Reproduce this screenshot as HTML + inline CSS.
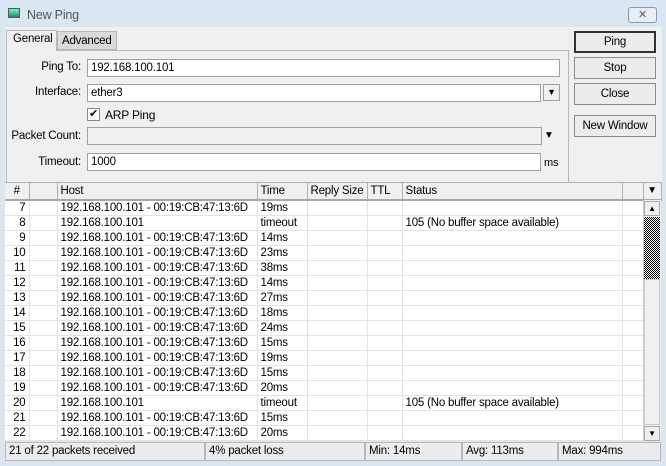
<!DOCTYPE html>
<html><head><style>
*{box-sizing:border-box;margin:0;padding:0}
body{width:666px;height:466px;background:#dbe6f3;font-family:"Liberation Sans",sans-serif;font-size:11.5px;color:#000;position:relative;overflow:hidden;letter-spacing:-0.2px}
.abs{position:absolute}
.panel{left:5px;top:27px;width:657px;height:435px;background:#f0f0f0}
.inp{position:absolute;background:#fff;border:1px solid #a0a0a0;height:18px;padding-left:3px;line-height:16px}
.lbl{position:absolute;text-align:right;width:80px}
.btn{position:absolute;left:574px;width:82px;height:22px;border:1px solid #8c8c8c;background:#ececec;text-align:center;line-height:20px}
table{border-collapse:collapse;position:absolute;left:5px;top:182px;table-layout:fixed}
td{height:15px;border-right:1px solid #e3e3e3;border-bottom:1px solid #e3e3e3;padding:0 3px;white-space:nowrap;overflow:hidden;line-height:14px;background:#fff}
th{height:17px;font-weight:normal;text-align:left;padding:0 3px;border-right:1px solid #b0b0b0;border-bottom:2px solid #a8a8a8;background:#f0f0f0;border-top:1px solid #b0b0b0}
td.n{text-align:right}
.sb{position:absolute;top:442px;height:19px;border:1px solid #b8b8b8;background:#ececec;padding-left:3px;line-height:17px}
</style></head><body>
<div class="abs" style="left:8px;top:8px;width:12px;height:10px;border:1px solid #555;background:linear-gradient(#6fa,#288)"></div>
<div class="abs" style="left:27px;top:8px;font-size:12.5px;color:#555">New Ping</div>
<div class="abs" style="left:628px;top:7px;width:29px;height:16px;border:1px solid #8a9ab0;border-radius:3px;background:#e8eef6;text-align:center;font-size:11px;line-height:14px;color:#556">✕</div>
<div class="abs panel"></div>
<div class="abs" style="left:6px;top:50px;width:563px;height:132px;border:1px solid #b8b8b8;border-bottom:none;background:#f0f0f0"></div>
<div class="abs" style="left:6px;top:30px;width:51px;height:21px;background:#f0f0f0;border:1px solid #b8b8b8;border-bottom:none;padding:2px 0 0 6px">General</div>
<div class="abs" style="left:57px;top:31px;width:60px;height:19px;background:#dadada;border:1px solid #b8b8b8;padding:3px 0 0 4px">Advanced</div>
<div class="lbl" style="left:1px;top:61px">Ping To:</div>
<div class="inp" style="left:87px;top:59px;width:473px">192.168.100.101</div>
<div class="lbl" style="left:1px;top:86px">Interface:</div>
<div class="inp" style="left:87px;top:84px;width:454px">ether3</div>
<div class="abs" style="left:543px;top:84px;width:17px;height:17px;border:1px solid #a0a0a0;background:#f0f0f0;text-align:center;font-size:9px;line-height:15px">▼</div>
<div class="abs" style="left:87px;top:108px;width:13px;height:13px;border:1px solid #888;background:#fff;font-size:11px;line-height:11px;text-align:center">✔</div>
<div class="abs" style="left:105px;top:108px;font-size:12px">ARP Ping</div>
<div class="lbl" style="left:1px;top:130px">Packet Count:</div>
<div class="inp" style="left:87px;top:127px;width:455px;background:#f0f0f0"></div>
<div class="abs" style="left:544px;top:130px;font-size:10px">▼</div>
<div class="lbl" style="left:1px;top:156px">Timeout:</div>
<div class="inp" style="left:87px;top:153px;width:454px">1000</div>
<div class="abs" style="left:544px;top:157px;font-size:11px">ms</div>
<div class="btn" style="top:31px;border:2px solid #333;line-height:19px">Ping</div>
<div class="btn" style="top:57px">Stop</div>
<div class="btn" style="top:83px">Close</div>
<div class="btn" style="top:115px">New Window</div>
<table>
<colgroup><col style="width:24px"><col style="width:28px"><col style="width:200px"><col style="width:50px"><col style="width:60px"><col style="width:35px"><col style="width:220px"><col style="width:21px"><col style="width:18px"></colgroup>
<tr><th style="text-align:center">#</th><th></th><th>Host</th><th>Time</th><th>Reply Size</th><th>TTL</th><th>Status</th><th></th><th style="text-align:center;font-size:10px">▼</th></tr>
<tr><td class="n">7</td><td></td><td>192.168.100.101 - 00:19:CB:47:13:6D</td><td>19ms</td><td></td><td></td><td></td><td></td><td></td></tr>
<tr><td class="n">8</td><td></td><td>192.168.100.101</td><td>timeout</td><td></td><td></td><td>105 (No buffer space available)</td><td></td><td></td></tr>
<tr><td class="n">9</td><td></td><td>192.168.100.101 - 00:19:CB:47:13:6D</td><td>14ms</td><td></td><td></td><td></td><td></td><td></td></tr>
<tr><td class="n">10</td><td></td><td>192.168.100.101 - 00:19:CB:47:13:6D</td><td>23ms</td><td></td><td></td><td></td><td></td><td></td></tr>
<tr><td class="n">11</td><td></td><td>192.168.100.101 - 00:19:CB:47:13:6D</td><td>38ms</td><td></td><td></td><td></td><td></td><td></td></tr>
<tr><td class="n">12</td><td></td><td>192.168.100.101 - 00:19:CB:47:13:6D</td><td>14ms</td><td></td><td></td><td></td><td></td><td></td></tr>
<tr><td class="n">13</td><td></td><td>192.168.100.101 - 00:19:CB:47:13:6D</td><td>27ms</td><td></td><td></td><td></td><td></td><td></td></tr>
<tr><td class="n">14</td><td></td><td>192.168.100.101 - 00:19:CB:47:13:6D</td><td>18ms</td><td></td><td></td><td></td><td></td><td></td></tr>
<tr><td class="n">15</td><td></td><td>192.168.100.101 - 00:19:CB:47:13:6D</td><td>24ms</td><td></td><td></td><td></td><td></td><td></td></tr>
<tr><td class="n">16</td><td></td><td>192.168.100.101 - 00:19:CB:47:13:6D</td><td>15ms</td><td></td><td></td><td></td><td></td><td></td></tr>
<tr><td class="n">17</td><td></td><td>192.168.100.101 - 00:19:CB:47:13:6D</td><td>19ms</td><td></td><td></td><td></td><td></td><td></td></tr>
<tr><td class="n">18</td><td></td><td>192.168.100.101 - 00:19:CB:47:13:6D</td><td>15ms</td><td></td><td></td><td></td><td></td><td></td></tr>
<tr><td class="n">19</td><td></td><td>192.168.100.101 - 00:19:CB:47:13:6D</td><td>20ms</td><td></td><td></td><td></td><td></td><td></td></tr>
<tr><td class="n">20</td><td></td><td>192.168.100.101</td><td>timeout</td><td></td><td></td><td>105 (No buffer space available)</td><td></td><td></td></tr>
<tr><td class="n">21</td><td></td><td>192.168.100.101 - 00:19:CB:47:13:6D</td><td>15ms</td><td></td><td></td><td></td><td></td><td></td></tr>
<tr><td class="n">22</td><td></td><td>192.168.100.101 - 00:19:CB:47:13:6D</td><td>20ms</td><td></td><td></td><td></td><td></td><td></td></tr>
<tr><td class="n">23</td><td></td><td>192.168.100.101 - 00:19:CB:47:13:6D</td><td>17ms</td><td></td><td></td><td></td><td></td><td></td></tr>
</table>
<div class="abs" style="left:5px;top:441px;width:657px;height:25px;background:#dbe6f3"></div>
<div class="abs" style="left:643px;top:200px;width:18px;height:241px;background:#f0f0f0;border-left:1px solid #ccc"></div>
<div class="abs" style="left:644px;top:201px;width:16px;height:15px;border:1px solid #aaa;background:#eee;text-align:center;font-size:8px;line-height:13px">▲</div>
<div class="abs" style="left:644px;top:217px;width:16px;height:62px;background:repeating-conic-gradient(#000 0 25%,#fff 0 50%) 0 0/2px 2px"></div>
<div class="abs" style="left:644px;top:279px;width:16px;height:146px;border:1px solid #ccc;background:#f0f0f0"></div>
<div class="abs" style="left:644px;top:426px;width:16px;height:15px;border:1px solid #aaa;background:#eee;text-align:center;font-size:8px;line-height:13px">▼</div>
<div class="sb" style="left:5px;width:200px">21 of 22 packets received</div>
<div class="sb" style="left:205px;width:160px">4% packet loss</div>
<div class="sb" style="left:365px;width:97px">Min: 14ms</div>
<div class="sb" style="left:462px;width:96px">Avg: 113ms</div>
<div class="sb" style="left:558px;width:103px">Max: 994ms</div>
</body></html>
